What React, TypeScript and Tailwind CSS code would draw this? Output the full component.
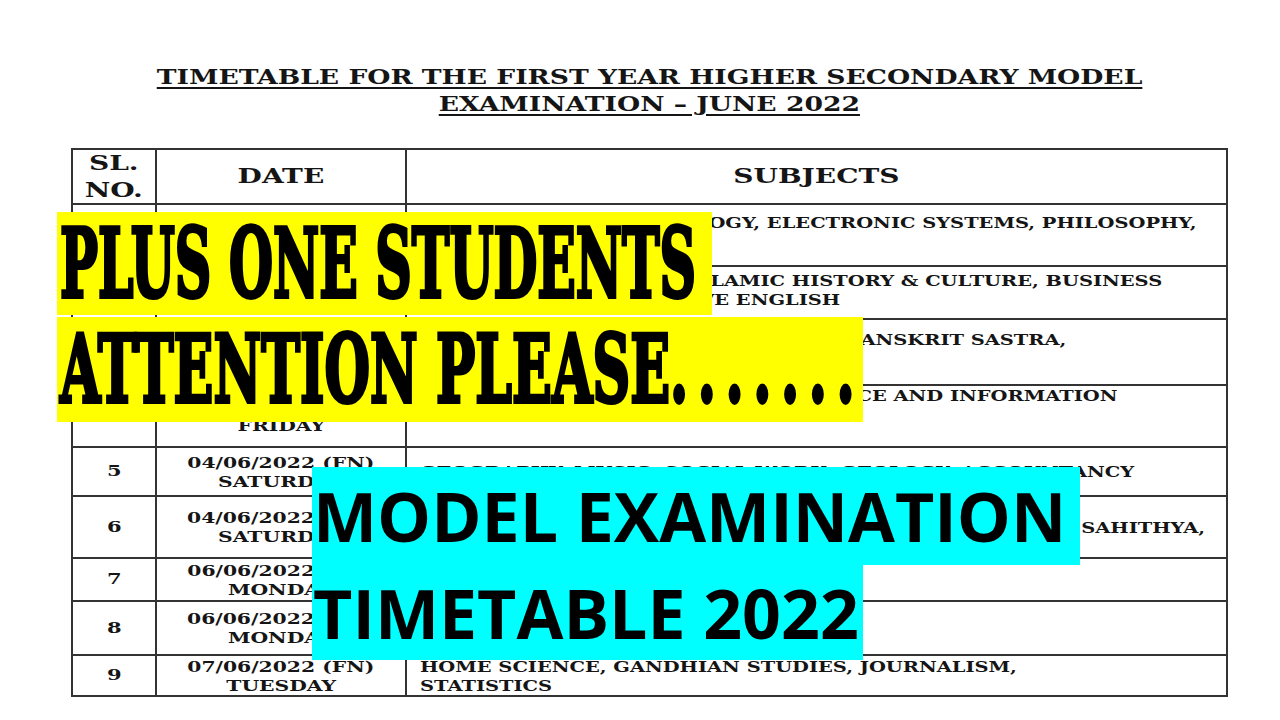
type Row = {
  sl: string
  date: [string, string]
  subjects: string[]
  h: string
  align: string
}

const rows: Row[] = [
  {
    sl: "1",
    date: ["02/06/2022 (FN)", "THURSDAY"],
    subjects: ["SOCIOLOGY, ANTHROPOLOGY, ELECTRONIC SYSTEMS, PHILOSOPHY,", "ELECTRONICS"],
    h: "h-[62px]",
    align: "justify-start pt-2",
  },
  {
    sl: "2",
    date: ["02/06/2022 (AN)", "THURSDAY"],
    subjects: ["PHYSICS, ECONOMICS, ISLAMIC HISTORY & CULTURE, BUSINESS", "STUDIES COMMUNICATIVE ENGLISH"],
    h: "h-[53px]",
    align: "justify-start pt-1",
  },
  {
    sl: "3",
    date: ["03/06/2022 (FN)", "FRIDAY"],
    subjects: ["CHEMISTRY, HISTORY, PSYCHOLOGY, SANSKRIT SASTRA,", "ARABIC"],
    h: "h-[66px]",
    align: "justify-start pt-[10px]",
  },
  {
    sl: "4",
    date: ["03/06/2022 (AN)", "FRIDAY"],
    subjects: ["URDU, MALAYALAM COMPUTER SCIENCE AND INFORMATION", "TECHNOLOGY"],
    h: "h-[62px]",
    align: "justify-start pt-0",
  },
  {
    sl: "5",
    date: ["04/06/2022 (FN)", "SATURDAY"],
    subjects: ["GEOGRAPHY, MUSIC, SOCIAL WORK, GEOLOGY, ACCOUNTANCY"],
    h: "h-[49px]",
    align: "justify-center",
  },
  {
    sl: "6",
    date: ["04/06/2022 (AN)", "SATURDAY"],
    subjects: ["ENGLISH, ELECTRONICS, PSYCHOLOGY, URDU, SANSKRIT SAHITHYA,"],
    h: "h-[62px]",
    align: "justify-center",
  },
  {
    sl: "7",
    date: ["06/06/2022 (FN)", "MONDAY"],
    subjects: ["MATHEMATICS, PART III LANGUAGES"],
    h: "h-[43px]",
    align: "justify-center",
  },
  {
    sl: "8",
    date: ["06/06/2022 (AN)", "MONDAY"],
    subjects: ["PART II LANGUAGES"],
    h: "h-[54px]",
    align: "justify-center",
  },
  {
    sl: "9",
    date: ["07/06/2022 (FN)", "TUESDAY"],
    subjects: ["HOME SCIENCE, GANDHIAN STUDIES, JOURNALISM,", "STATISTICS"],
    h: "h-[41px]",
    align: "justify-center",
  },
]

// the scanned sheet is stretched sideways, so every text run is widened
function Stretch({ children, origin = "origin-center" }: { children: React.ReactNode; origin?: string }) {
  return <span className={`inline-block whitespace-nowrap scale-x-[1.4] ${origin}`}>{children}</span>
}

export default function App() {
  return (
    <div className="relative w-[1280px] h-[720px] overflow-hidden bg-white text-[#151515] font-['DejaVu_Serif',serif] font-bold">
      {/* heading */}
      <div className="ml-[71px] w-[1157px] pt-[64px] text-center text-[20px] leading-[27px]">
        <div>
          <span className="inline-block whitespace-nowrap scale-x-[1.33] origin-center underline decoration-2 underline-offset-[3px]">
            TIMETABLE FOR THE FIRST YEAR HIGHER SECONDARY MODEL
          </span>
        </div>
        <div>
          <span className="inline-block whitespace-nowrap scale-x-[1.33] origin-center underline decoration-2 underline-offset-[3px]">
            EXAMINATION – JUNE 2022
          </span>
        </div>
      </div>

      {/* timetable */}
      <div className="mt-[30px] ml-[71px] w-[1157px] border-2 border-[#333]">
        <div className="flex h-[53px] text-[20px] leading-[27px]">
          <div className="w-[82px] flex flex-col items-center justify-center">
            <Stretch>SL.</Stretch>
            <Stretch>NO.</Stretch>
          </div>
          <div className="w-[250px] border-l-2 border-[#333] flex items-center justify-center">
            <Stretch>DATE</Stretch>
          </div>
          <div className="flex-1 border-l-2 border-[#333] flex items-center justify-center">
            <Stretch>SUBJECTS</Stretch>
          </div>
        </div>

        {rows.map((r) => (
          <div key={r.sl} className={`flex border-t-2 border-[#333] text-[14.5px] leading-[19px] ${r.h}`}>
            <div className="w-[82px] flex items-center justify-center text-[15px]">
              <Stretch>{r.sl}</Stretch>
            </div>
            <div className="w-[250px] border-l-2 border-[#333] flex flex-col items-center justify-center">
              <Stretch>{r.date[0]}</Stretch>
              <Stretch>{r.date[1]}</Stretch>
            </div>
            <div className={`flex-1 border-l-2 border-[#333] flex flex-col pl-[13px] ${r.align}`}>
              {r.subjects.map((s) => (
                <div key={s}>
                  <span className="inline-block whitespace-nowrap scale-x-[1.34] origin-left">{s}</span>
                </div>
              ))}
            </div>
          </div>
        ))}
      </div>

      {/* yellow banner */}
      <div className="absolute left-[57px] top-[212px] w-[655px] h-[103px] bg-[#ffff00] flex items-center pl-[3px]">
        <span className="shrink-0 inline-block whitespace-nowrap origin-left scale-x-[0.532] text-[95px] leading-none text-black [-webkit-text-stroke:4px_black]">
          PLUS ONE STUDENTS
        </span>
      </div>
      <div className="absolute left-[57px] top-[317px] w-[806px] h-[105px] bg-[#ffff00] flex items-center pl-[3px]">
        <span className="shrink-0 inline-block whitespace-nowrap origin-left scale-x-[0.562] text-[93px] leading-none text-black [-webkit-text-stroke:4px_black]">
          ATTENTION PLEASE<span className="tracking-[17px]">.......</span>
        </span>
      </div>

      {/* cyan banner */}
      <div className="absolute left-[312px] top-[467px] w-[768px] h-[98px] bg-[#00ffff] flex items-center pl-[1px] font-['Open_Sans',sans-serif] text-[68px] leading-none text-black">
        MODEL EXAMINATION
      </div>
      <div className="absolute left-[312px] top-[565px] w-[551px] h-[95px] bg-[#00ffff] flex items-center pl-[1px] font-['Open_Sans',sans-serif] text-[68px] leading-none text-black">
        TIMETABLE 2022
      </div>
    </div>
  )
}
